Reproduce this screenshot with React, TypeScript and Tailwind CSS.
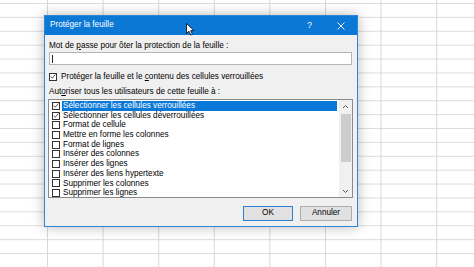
const PERMISSIONS = [
  { label: "Sélectionner les cellules verrouillées", checked: true, selected: true },
  { label: "Sélectionner les cellules déverrouillées", checked: true, selected: false },
  { label: "Format de cellule", checked: false, selected: false },
  { label: "Mettre en forme les colonnes", checked: false, selected: false },
  { label: "Format de lignes", checked: false, selected: false },
  { label: "Insérer des colonnes", checked: false, selected: false },
  { label: "Insérer des lignes", checked: false, selected: false },
  { label: "Insérer des liens hypertexte", checked: false, selected: false },
  { label: "Supprimer les colonnes", checked: false, selected: false },
  { label: "Supprimer les lignes", checked: false, selected: false },
];

function CheckBox({ checked }: { checked: boolean }) {
  return (
    <div className="w-[8px] h-[8px] shrink-0 border border-[#333] bg-white flex items-center justify-center">
      {checked && (
        <svg width="7" height="7" viewBox="0 0 7 7">
          <path d="M0.8 3.6 L2.7 5.4 L6.2 1.2" fill="none" stroke="#222" strokeWidth="0.9" />
        </svg>
      )}
    </div>
  );
}

function Chevron({ up }: { up: boolean }) {
  return (
    <svg width="7" height="5" viewBox="0 0 7 5">
      <path
        d={up ? "M1 4 L3.5 1.5 L6 4" : "M1 1 L3.5 3.5 L6 1"}
        fill="none"
        stroke="#555"
        strokeWidth="1"
      />
    </svg>
  );
}

export default function App() {
  return (
    <div
      className="relative w-[474px] h-[267px] overflow-hidden bg-white bg-[linear-gradient(to_right,#d8d8d8_1px,transparent_1px),linear-gradient(to_bottom,#dcdcdc_1px,transparent_1px)] bg-[size:55.6px_13.9px] bg-[position:47px_3px] text-[8.2px] text-black"
      style={{ fontFamily: '"Liberation Sans", Arial, sans-serif' }}
    >
      {/* Dialog */}
      <div className="absolute left-[44px] top-[15px] w-[314px] flex flex-col bg-[#f0f0f0] border border-[#2f86d6] shadow-[0_0_12px_rgba(0,0,0,0.28)]">
        {/* Title bar */}
        <div className="h-[19px] bg-[#0c78d6] flex items-center text-white pl-[5px]">
          <span className="text-[8.2px] leading-none">Protéger la feuille</span>
          <div className="flex-1" />
          <span className="text-[9px] leading-none mr-[25px]">?</span>
          <svg width="8" height="8" viewBox="0 0 8 8" className="mr-[12px]">
            <path d="M0.5 0.5 L7.5 7.5 M7.5 0.5 L0.5 7.5" stroke="#fff" strokeWidth="0.9" />
          </svg>
        </div>

        {/* Body */}
        <div className="flex flex-col pl-[4px] pr-[5px]">
          <div className="mt-[6px] leading-[10px]">
            Mot de <u>p</u>asse pour ôter la protection de la feuille :
          </div>
          <div className="mt-[1px] h-[13px] bg-white border border-[#b5b5b5] flex items-center pl-[2px]">
            <div className="w-[1px] h-[8px] bg-[#222]" />
          </div>

          <div className="mt-[7px] h-[9px] flex items-center gap-[4px]">
            <CheckBox checked />
            <span className="leading-[10px]">
              Protéger la feuille et le <u>c</u>ontenu des cellules verrouillées
            </span>
          </div>

          <div className="mt-[6px] leading-[10px]">
            Aut<u>o</u>riser tous les utilisateurs de cette feuille à :
          </div>

          {/* List */}
          <div className="mt-[2px] -ml-[1px] -mr-[1px] h-[99px] bg-white border border-[#8a8a8a] flex">
            <div className="flex-1 flex flex-col pt-[1px] overflow-hidden">
              {PERMISSIONS.map((item) => (
                <div key={item.label} className="h-[9.7px] shrink-0 flex items-center">
                  <div className="ml-[3px] mr-[2px]">
                    <CheckBox checked={item.checked} />
                  </div>
                  <span
                    className={`leading-[9.7px] pl-[1px] ${
                      item.selected ? "bg-[#0a78d7] text-white flex-1 mr-[2px]" : ""
                    }`}
                  >
                    {item.label}
                  </span>
                </div>
              ))}
            </div>
            <div className="w-[13px] shrink-0 bg-[#f0f0f0] flex flex-col items-center">
              <div className="h-[12px] flex items-center justify-center">
                <Chevron up />
              </div>
              <div className="mt-[2px] w-[10px] h-[48px] bg-[#cdcdcd]" />
              <div className="flex-1" />
              <div className="h-[12px] flex items-center justify-center">
                <Chevron up={false} />
              </div>
            </div>
          </div>

          {/* Buttons */}
          <div className="mt-[8px] mb-[5px] flex justify-end gap-[7px]">
            <div className="w-[50px] h-[15px] bg-[#e1e1e1] border border-[#2a7fd1] flex items-center justify-center">
              OK
            </div>
            <div className="w-[52px] h-[15px] bg-[#e1e1e1] border border-[#adadad] flex items-center justify-center">
              Annuler
            </div>
          </div>
        </div>
      </div>

      {/* Mouse pointer */}
      <svg
        className="absolute left-[186px] top-[23px]"
        width="9"
        height="13"
        viewBox="0 0 9 13"
      >
        <path
          d="M0.5 0.5 L0.5 10.5 L3 8.2 L4.8 12 L6.4 11.3 L4.7 7.6 L8 7.6 Z"
          fill="#fff"
          stroke="#000"
          strokeWidth="0.8"
        />
      </svg>
    </div>
  );
}
